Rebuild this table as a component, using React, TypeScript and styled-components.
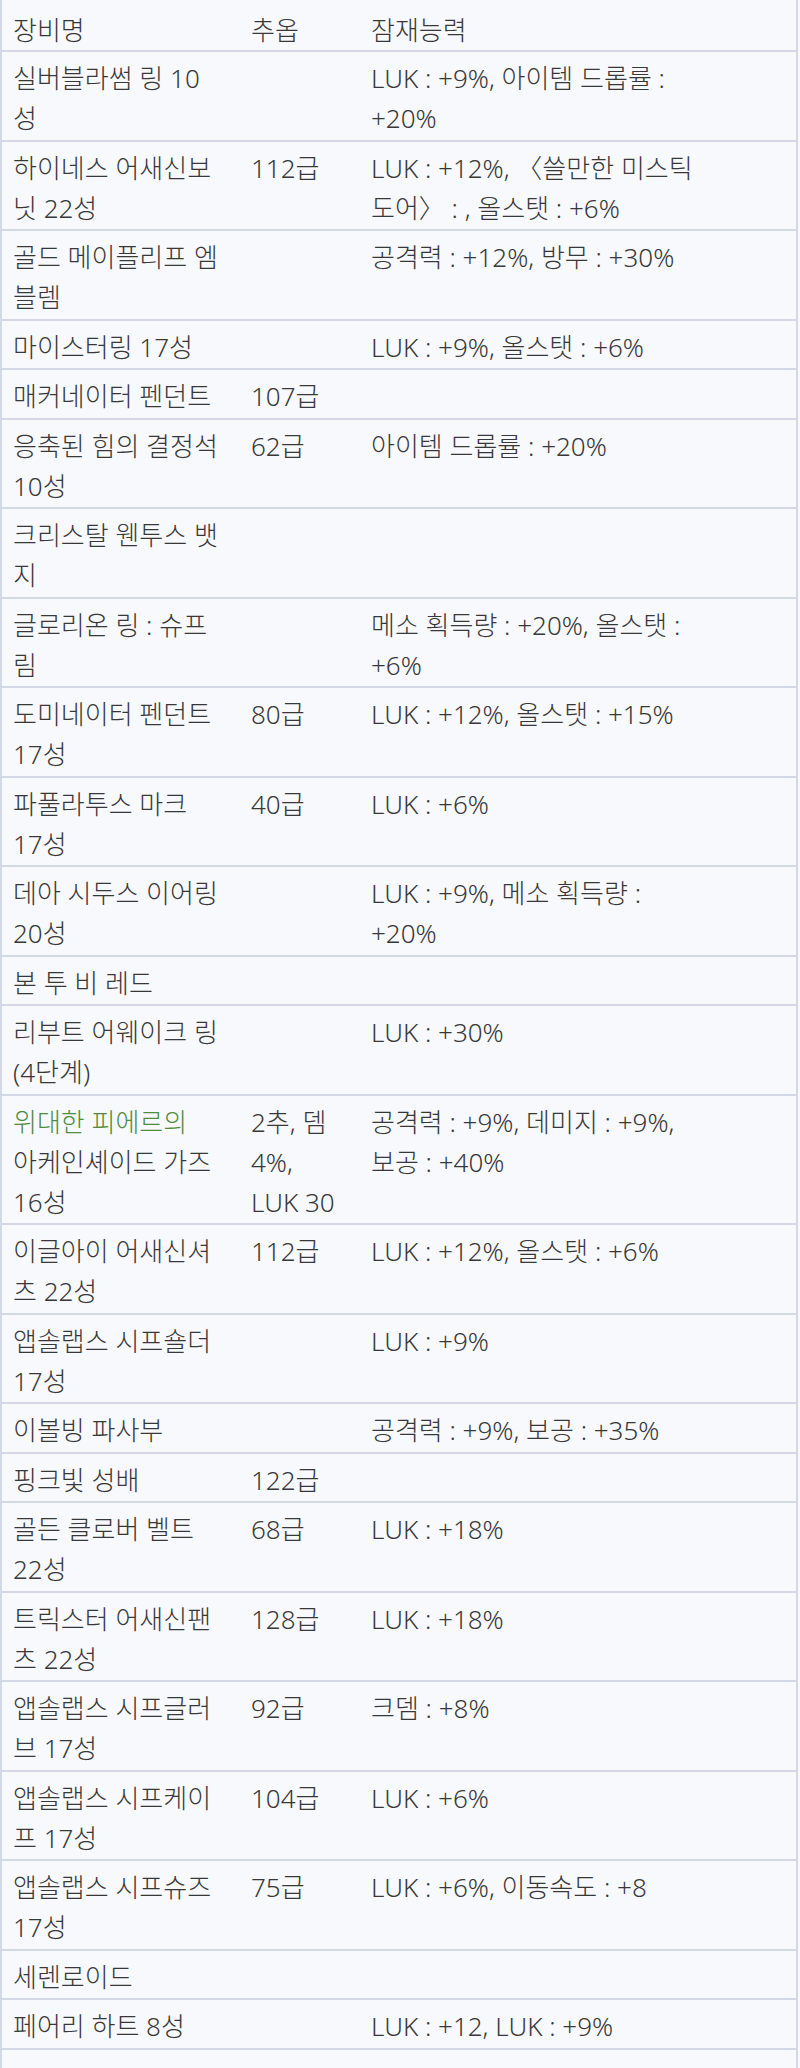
import styled, { createGlobalStyle } from "styled-components";

// 줄바꿈은 원본 캡처와 맞추려고 \n 으로 직접 넣음
interface ItemRow {
  name: string;
  green?: string;
  flame?: string;
  potential?: string;
}

const rows: ItemRow[] = [
  { name: "실버블라썸 링 10\n성", potential: "LUK : +9%, 아이템 드롭률 :\n+20%" },
  { name: "하이네스 어새신보\n닛 22성", flame: "112급", potential: "LUK : +12%, 〈쓸만한 미스틱\n도어〉 : , 올스탯 : +6%" },
  { name: "골드 메이플리프 엠\n블렘", potential: "공격력 : +12%, 방무 : +30%" },
  { name: "마이스터링 17성", potential: "LUK : +9%, 올스탯 : +6%" },
  { name: "매커네이터 펜던트", flame: "107급" },
  { name: "응축된 힘의 결정석\n10성", flame: "62급", potential: "아이템 드롭률 : +20%" },
  { name: "크리스탈 웬투스 뱃\n지" },
  { name: "글로리온 링 : 슈프\n림", potential: "메소 획득량 : +20%, 올스탯 :\n+6%" },
  { name: "도미네이터 펜던트\n17성", flame: "80급", potential: "LUK : +12%, 올스탯 : +15%" },
  { name: "파풀라투스 마크\n17성", flame: "40급", potential: "LUK : +6%" },
  { name: "데아 시두스 이어링\n20성", potential: "LUK : +9%, 메소 획득량 :\n+20%" },
  { name: "본 투 비 레드" },
  { name: "리부트 어웨이크 링\n(4단계)", potential: "LUK : +30%" },
  {
    name: "아케인셰이드 가즈\n16성",
    green: "위대한 피에르의",
    flame: "2추, 뎀\n4%,\nLUK 30",
    potential: "공격력 : +9%, 데미지 : +9%,\n보공 : +40%",
  },
  { name: "이글아이 어새신셔\n츠 22성", flame: "112급", potential: "LUK : +12%, 올스탯 : +6%" },
  { name: "앱솔랩스 시프숄더\n17성", potential: "LUK : +9%" },
  { name: "이볼빙 파사부", potential: "공격력 : +9%, 보공 : +35%" },
  { name: "핑크빛 성배", flame: "122급" },
  { name: "골든 클로버 벨트\n22성", flame: "68급", potential: "LUK : +18%" },
  { name: "트릭스터 어새신팬\n츠 22성", flame: "128급", potential: "LUK : +18%" },
  { name: "앱솔랩스 시프글러\n브 17성", flame: "92급", potential: "크뎀 : +8%" },
  { name: "앱솔랩스 시프케이\n프 17성", flame: "104급", potential: "LUK : +6%" },
  { name: "앱솔랩스 시프슈즈\n17성", flame: "75급", potential: "LUK : +6%, 이동속도 : +8" },
  { name: "세렌로이드" },
  { name: "페어리 하트 8성", potential: "LUK : +12, LUK : +9%" },
];

const GlobalStyle = createGlobalStyle`
  html, body {
    margin: 0;
    padding: 0;
    background: #f8f9fd;
  }
  body {
    font-family: "Noto Sans", "Noto Sans CJK KR", sans-serif;
    color: #383838;
  }
`;

const Table = styled.div`
  width: 798px;
  border-left: 2px solid #d3d8e4;
  border-right: 2px solid #d3d8e4;
  box-sizing: border-box;
  background: #f8f9fd;
  padding-bottom: 20px;
`;

const Row = styled.div<{ $head?: boolean }>`
  display: grid;
  grid-template-columns: 238px 120px 1fr;
  border-bottom: 2px solid #d3d8e4;
  padding: ${(p) => (p.$head ? "10px 0 0" : "6px 0 1.5px")};
`;

const Cell = styled.div`
  padding-left: 11px;
  font-size: 26px;
  font-weight: 300;
  line-height: 40px;
  letter-spacing: 0;
  white-space: pre-line;
`;

const Green = styled.div`
  color: #4f8c3c;
`;

export default function App() {
  return (
    <>
      <GlobalStyle />
      <Table>
        <Row $head>
          <Cell>장비명</Cell>
          <Cell>추옵</Cell>
          <Cell>잠재능력</Cell>
        </Row>
        {rows.map((r) => (
          <Row key={r.name}>
            <Cell>
              {r.green && <Green>{r.green}</Green>}
              {r.name}
            </Cell>
            <Cell>{r.flame}</Cell>
            <Cell>{r.potential}</Cell>
          </Row>
        ))}
      </Table>
    </>
  );
}
